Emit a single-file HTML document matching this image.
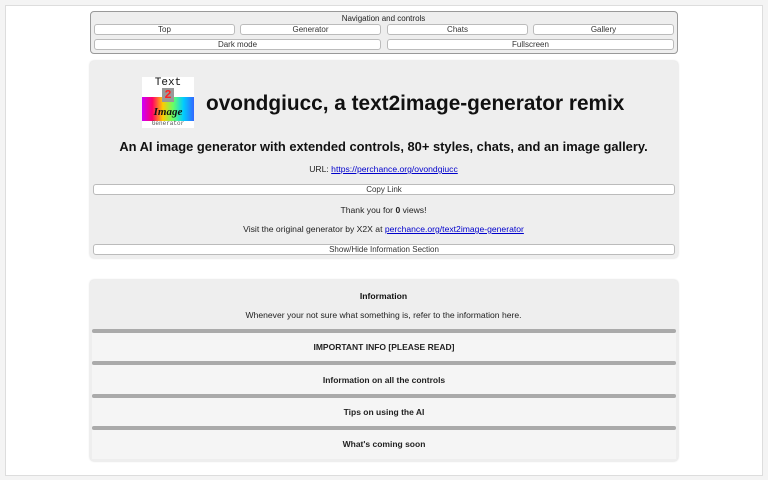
<!DOCTYPE html>
<html><head><meta charset="utf-8"><style>
*{box-sizing:border-box;margin:0;padding:0}
body{width:768px;height:480px;background:#f4f4f4;font-family:"Liberation Sans",Arial,sans-serif;position:relative;overflow:hidden;color:#111}
.a{position:absolute}
.page{left:5px;top:5px;width:758px;height:471px;background:#fff;border:1px solid #ddd}
.btn{position:absolute;height:11px;background:#fff;border:1px solid #bbb;border-radius:3px;font-size:8px;line-height:9px;text-align:center;color:#333}
.c{position:absolute;left:90px;width:587px;text-align:center}
.bar{position:absolute;left:92px;width:584px;height:4px;background:#aaa;border-radius:2px}
.row{position:absolute;left:92px;width:584px;background:#f5f5f5;font-size:8.5px;font-weight:bold;text-align:center;color:#222}
a{color:#00c}
</style></head><body>
<div class="a page"></div>
<div class="a" style="left:90px;top:11px;width:588px;height:43px;border:1px solid #999;border-radius:4px;background:#eee"></div>
<div class="c" style="top:14px;font-size:8px;color:#222">Navigation and controls</div>
<div class="btn" style="left:94px;top:24px;width:141px">Top</div>
<div class="btn" style="left:240px;top:24px;width:141px">Generator</div>
<div class="btn" style="left:387px;top:24px;width:141px">Chats</div>
<div class="btn" style="left:533px;top:24px;width:141px">Gallery</div>
<div class="btn" style="left:94px;top:39px;width:287px">Dark mode</div>
<div class="btn" style="left:387px;top:39px;width:287px">Fullscreen</div>

<div class="a" style="left:90px;top:61px;width:588px;height:197px;background:#eee;border-radius:4px;box-shadow:0 0 2px #ccc"></div>
<div class="a" style="left:142px;top:77px;width:52px;height:51px;background:#fff;overflow:hidden">
 <div class="a" style="left:0;top:0;width:52px;text-align:center;font:11px 'Liberation Mono',monospace">Text</div>
 <div class="a" style="left:0;top:20px;width:52px;height:24px;background:linear-gradient(90deg,#c0f 0%,#f06 20%,#fc0 40%,#6f6 60%,#0cf 80%,#36f 100%)"></div>
 <div class="a" style="left:20px;top:11px;width:12px;height:14px;background:#999;color:#f22;font:bold 12px 'Liberation Mono',monospace;text-align:center;line-height:14px">2</div>
 <div class="a" style="left:0;top:29px;width:52px;text-align:center;font:italic bold 11px 'Liberation Serif',serif">Image</div>
 <div class="a" style="left:0;top:43px;width:52px;text-align:center;font:6px 'Liberation Mono',monospace;color:#555">Generator</div>
</div>
<div class="a" style="left:206px;top:92px;font-size:20.8px;font-weight:bold;white-space:nowrap">ovondgiucc, a text2image-generator remix</div>
<div class="c" style="top:139px;font-size:12.9px;font-weight:bold">An AI image generator with extended controls, 80+ styles, chats, and an image gallery.</div>
<div class="c" style="top:164px;font-size:8.6px;color:#222">URL: <a href="#">https://perchance.org/ovondgiucc</a></div>
<div class="btn" style="left:93px;top:184px;width:582px">Copy Link</div>
<div class="c" style="top:205px;font-size:8.6px;color:#222">Thank you for <b>0</b> views!</div>
<div class="c" style="top:224px;font-size:8.6px;color:#222">Visit the original generator by X2X at <a href="#">perchance.org/text2image-generator</a></div>
<div class="btn" style="left:93px;top:244px;width:582px">Show/Hide Information Section</div>

<div class="a" style="left:90px;top:280px;width:588px;height:181px;background:#eee;border-radius:4px;box-shadow:0 0 2px #ccc"></div>
<div class="c" style="top:291px;font-size:8.6px;font-weight:bold">Information</div>
<div class="c" style="top:310px;font-size:8.6px;color:#222">Whenever your not sure what something is, refer to the information here.</div>
<div class="bar" style="top:329px"></div>
<div class="row" style="top:333px;height:28px;line-height:28px">IMPORTANT INFO [PLEASE READ]</div>
<div class="bar" style="top:361px"></div>
<div class="row" style="top:365px;height:29px;line-height:30px">Information on all the controls</div>
<div class="bar" style="top:394px"></div>
<div class="row" style="top:398px;height:28px;line-height:28px">Tips on using the AI</div>
<div class="bar" style="top:426px"></div>
<div class="row" style="top:430px;height:29px;line-height:29px">What's coming soon</div>
</body></html>
